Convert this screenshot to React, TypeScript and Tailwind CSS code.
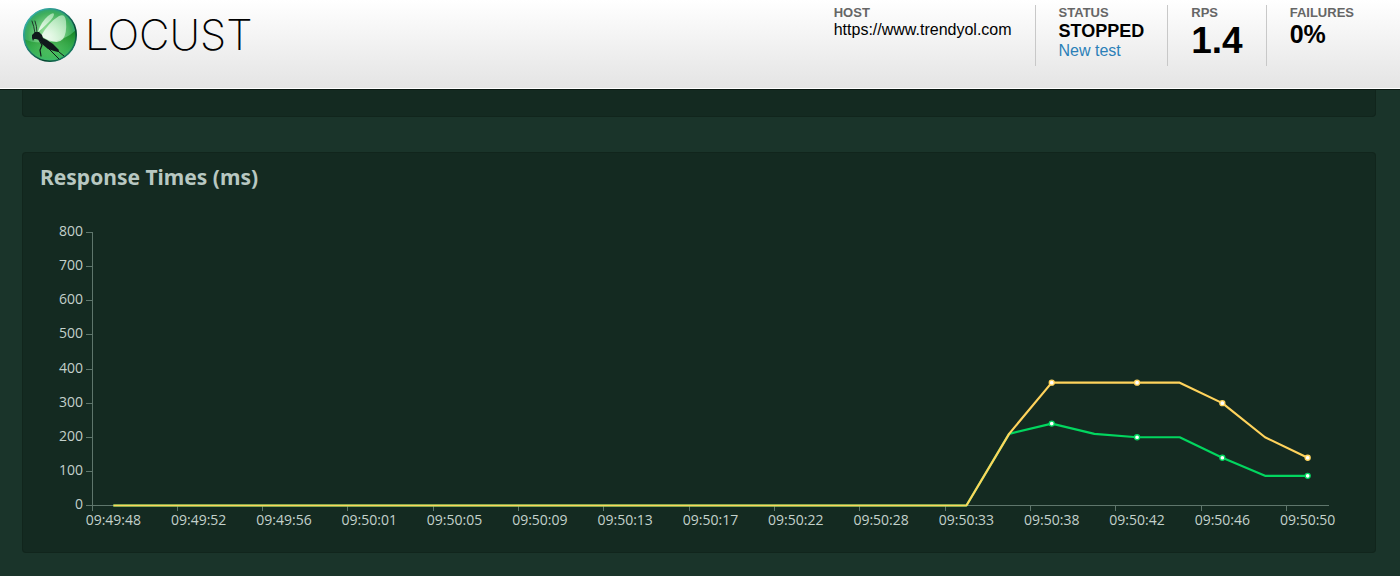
import type { ReactNode } from "react";

const AXIS_LEFT = 70;
const AXIS_RIGHT = 1307;
const AXIS_TOP = 40;
const AXIS_BOTTOM = 313;
const MAX_VALUE = 800;

const LABELS = [
  "09:49:48", "09:49:52", "09:49:56", "09:50:01", "09:50:05",
  "09:50:09", "09:50:13", "09:50:17", "09:50:22", "09:50:28",
  "09:50:33", "09:50:38", "09:50:42", "09:50:46", "09:50:50",
];

const IDLE = Array<number>(21).fill(0);
const MEDIAN = [...IDLE, 210, 240, 210, 200, 200, 140, 87, 87];
const PERCENTILE_95 = [...IDLE, 210, 360, 360, 360, 360, 300, 200, 140];

const BAND = (AXIS_RIGHT - AXIS_LEFT) / MEDIAN.length;

const xOf = (index: number) => AXIS_LEFT + BAND * (index + 0.5);
const yOf = (value: number) =>
  AXIS_BOTTOM - ((AXIS_BOTTOM - AXIS_TOP) * value) / MAX_VALUE;

interface SeriesProps {
  values: number[];
  color: string;
  radius: number;
}

function Series({ values, color, radius }: SeriesProps) {
  return (
    <g stroke={color} strokeWidth="2">
      <polyline
        points={values.map((v, i) => `${xOf(i)},${yOf(v) + 0.5}`).join(" ")}
        fill="none"
        strokeWidth="2.2"
        strokeLinejoin="bevel"
      />
      {values.map((v, i) =>
        v > 0 && i % 2 === 0 ? (
          <circle key={i} cx={xOf(i)} cy={yOf(v) + 0.5} r={radius} fill="#fff" strokeWidth="1.3" />
        ) : null
      )}
    </g>
  );
}

function ResponseTimesChart() {
  const yTicks = [0, 100, 200, 300, 400, 500, 600, 700, 800];

  return (
    <svg
      viewBox="0 0 1354 361"
      role="img"
      aria-label="Response Times (ms)"
      className="block w-full font-['Open_Sans','Noto_Sans',sans-serif] text-[14px]"
    >
      <g stroke="#5f766c" strokeWidth="1" shapeRendering="crispEdges">
        <path d={`M${AXIS_LEFT + 0.5} ${AXIS_TOP}V${AXIS_BOTTOM + 1}`} />
        <path d={`M${AXIS_LEFT} ${AXIS_BOTTOM + 0.5}H${AXIS_RIGHT}`} />
        {yTicks.map((v) => (
          <path key={v} d={`M${AXIS_LEFT - 6} ${Math.round(yOf(v)) + 0.5}h6`} />
        ))}
        {LABELS.map((label, i) => (
          <path
            key={label}
            d={`M${Math.floor(AXIS_LEFT + BAND * i * 2) + 0.5} ${AXIS_BOTTOM}v6`}
          />
        ))}
      </g>
      <g fill="#c3d1cb">
        {yTicks.map((v) => (
          <text key={v} x={AXIS_LEFT - 9} y={Math.round(yOf(v)) + 4} textAnchor="end">
            {v}
          </text>
        ))}
        {LABELS.map((label, i) => (
          <text key={label} x={xOf(i * 2)} y={AXIS_BOTTOM + 20} textAnchor="middle">
            {label}
          </text>
        ))}
      </g>
      <Series values={MEDIAN} color="#02d65f" radius={2.5} />
      <Series values={PERCENTILE_95} color="#ffd35c" radius={2.5} />
    </svg>
  );
}

function LocustIcon() {
  return (
    <svg viewBox="0 0 54 54" className="size-[54px]" aria-hidden="true">
      <defs>
        <radialGradient id="ball" cx="0.5" cy="0.5" r="0.56">
          <stop offset="0" stopColor="#b9efba" />
          <stop offset="0.35" stopColor="#7fd488" />
          <stop offset="0.75" stopColor="#3fae5c" />
          <stop offset="1" stopColor="#1f9c8a" />
        </radialGradient>
        <linearGradient id="lower" x1="0" y1="0" x2="0" y2="1">
          <stop offset="0" stopColor="#0c7a14" stopOpacity="0.85" />
          <stop offset="1" stopColor="#4fd268" stopOpacity="0.45" />
        </linearGradient>
        <linearGradient id="rim" x1="0" y1="0" x2="1" y2="1">
          <stop offset="0" stopColor="#3fc0bd" />
          <stop offset="0.35" stopColor="#2a8f86" />
          <stop offset="0.7" stopColor="#07452f" />
          <stop offset="1" stopColor="#28a68e" />
        </linearGradient>
        <linearGradient id="wing" x1="0" y1="1" x2="1" y2="0">
          <stop offset="0" stopColor="#fff" stopOpacity="0.9" />
          <stop offset="1" stopColor="#cff5d4" stopOpacity="0.6" />
        </linearGradient>
      </defs>
      <circle cx="27" cy="27" r="26.5" fill="url(#ball)" />
      <path d="M1 31Q11 36 26 34Q43 32 53 22Q55 43 38 51Q27 56 15 50Q4 44 1 31Z" fill="url(#lower)" />
      <circle cx="27" cy="27" r="26.2" fill="none" stroke="url(#rim)" strokeWidth="1.6" />
      <path d="M15 24Q18 14 25 8Q30 4 31 6Q31 9 26 14Q20 20 15 24Z" fill="url(#wing)" />
      <path d="M18 28Q26 14 36 8Q42 5 43 13Q44 25 40 31Q34 38 18 28Z" fill="url(#wing)" />
      <path d="M9 30L9 27L12 24L16 24L19 27L20 30L24 32L30 36L36 42L35 44L31 43L25 41L19 36L16 32L13 31L11 31L10 33Z" fill="#10181b" />
      <g fill="none" stroke="#10181b" strokeLinecap="round">
        <path d="M12 25Q11 18 9 13M14 25Q14 18 12 13" strokeWidth="0.8" />
        <path d="M16 32L19 37L17 42L18 48" strokeWidth="1.2" />
        <path d="M25 40L30 45L36 51M31 39L36 44L41 48" strokeWidth="1" />
      </g>
    </svg>
  );
}

function Stat({ label, children }: { label: string; children: ReactNode }) {
  return (
    <div className="border-l border-[#c8c8c8] px-[23px] pb-[5px] first:border-l-0">
      <div className="text-[13px] leading-4 font-bold text-[#666]">{label}</div>
      {children}
    </div>
  );
}

export default function App() {
  return (
    <div className="min-h-screen bg-[#1a342a] font-['Liberation_Sans',Arial,sans-serif] text-black">
      <header className="flex h-[90px] items-start justify-between border-b border-[#0a1711] bg-linear-to-b from-white to-[#e4e4e4] px-[23px] shadow-[inset_0_-1px_0_#fff]">
        <div className="flex items-center gap-2 pt-2">
          <LocustIcon />
          <span className="font-[Inter,sans-serif] text-[42px] leading-[54px] font-extralight">LOCUST</span>
        </div>
        <div className="flex pt-[5px]">
          <Stat label="HOST">
            <div className="text-[16px] leading-[18px]">https://www.trendyol.com</div>
          </Stat>
          <Stat label="STATUS">
            <div className="text-[18px] leading-5 font-bold">STOPPED</div>
            <a href="#" className="block text-[16px] leading-5 text-[#2b80b8]">
              New test
            </a>
          </Stat>
          <Stat label="RPS">
            <div className="text-[37px] leading-10 font-bold">1.4</div>
          </Stat>
          <Stat label="FAILURES">
            <div className="text-[25px] leading-[26px] font-bold">0%</div>
          </Stat>
        </div>
      </header>

      <main className="flex flex-col gap-[35px] pr-6 pb-6 pl-[22px]">
        <section className="h-[27px] rounded-b border border-t-0 border-[#11251c] bg-[#142a21]" />
        <section className="rounded bg-[#142a21] outline -outline-offset-1 outline-[#11251c]">
          <h2 className="px-[18px] pt-[10px] font-['Noto_Sans','Open_Sans',sans-serif] text-[21px] leading-[30px] font-bold text-[#b8c8c1]">
            Response Times (ms)
          </h2>
          <ResponseTimesChart />
        </section>
      </main>
    </div>
  );
}
